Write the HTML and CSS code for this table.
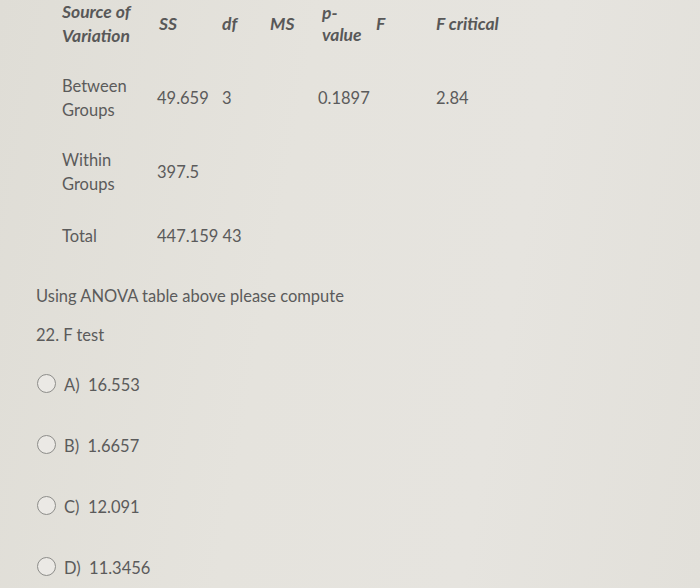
FILE: index.html
```html
<!DOCTYPE html>
<html>
<head>
<meta charset="utf-8">
<link rel="stylesheet" href="styles.css">
</head>
<body>
<div class="page">
  <div class="anova">
    <div class="row head">
      <div class="c c1">Source of<br>Variation</div>
      <div class="c c2">SS</div>
      <div class="c c3">df</div>
      <div class="c c4">MS</div>
      <div class="c c5">p-<br>value</div>
      <div class="c c6">F</div>
      <div class="c c7">F critical</div>
    </div>
    <div class="row">
      <div class="c c1">Between<br>Groups</div>
      <div class="c c2">49.659</div>
      <div class="c c3">3</div>
      <div class="c c4"></div>
      <div class="c c5 pv">0.1897</div>
      <div class="c c6"></div>
      <div class="c c7">2.84</div>
    </div>
    <div class="row">
      <div class="c c1">Within<br>Groups</div>
      <div class="c c2">397.5</div>
      <div class="c c3"></div>
      <div class="c c4"></div>
      <div class="c c5"></div>
      <div class="c c6"></div>
      <div class="c c7"></div>
    </div>
    <div class="row total">
      <div class="c c1">Total</div>
      <div class="c c2">447.159 43</div>
      <div class="c c3"></div>
      <div class="c c4"></div>
      <div class="c c5"></div>
      <div class="c c6"></div>
      <div class="c c7"></div>
    </div>
  </div>

  <p class="prompt">Using ANOVA table above please compute</p>
  <p class="qnum">22. F test</p>

  <ul class="options">
    <li class="opt"><span class="radio"></span><span class="label">A)&nbsp; 16.553</span></li>
    <li class="opt"><span class="radio"></span><span class="label">B)&nbsp; 1.6657</span></li>
    <li class="opt"><span class="radio"></span><span class="label">C)&nbsp; 12.091</span></li>
    <li class="opt"><span class="radio"></span><span class="label">D)&nbsp; 11.3456</span></li>
  </ul>
</div>
</body>
</html>
```

FILE: styles.css
```css
html, body {
  margin: 0;
  padding: 0;
  background: #e3e1db;
}
body {
  width: 700px;
  height: 588px;
  overflow: hidden;
  font-family: Lato, "Open Sans", sans-serif;
  font-size: 16.5px;
  color: #5b5b5b;
  background: linear-gradient(100deg, #dfddd6 0%, #e5e3dd 40%, #e6e4df 70%, #e2e0da 100%);
}
.page {
  padding: 0 0 0 36px;
}
.anova {
  display: flex;
  flex-direction: column;
  row-gap: 26px;
  padding-left: 26px;
}
.row {
  display: grid;
  grid-template-columns: 95px 65px 48px 50px 56px 60px 120px;
  align-items: center;
  line-height: 24px;
  min-height: 48px;
}
.c {
  white-space: nowrap;
}
.row.total {
  min-height: 24px;
  margin-top: 2px;
}
.head {
  font-style: italic;
  font-weight: 700;
  font-size: 17.5px;
  color: #585858;
}
.head .c2 {
  padding-left: 2px;
}
.head .c5 {
  padding-left: 2px;
  line-height: 22px;
}
.pv {
  margin-left: -2px;
}
.prompt {
  margin: 36px 0 0 0;
  line-height: 24px;
}
.qnum {
  margin: 15px 0 0 0;
  line-height: 24px;
}
.options {
  list-style: none;
  margin: 26px 0 0 0;
  padding: 0;
  display: flex;
  flex-direction: column;
  row-gap: 37px;
}
.opt {
  display: flex;
  align-items: center;
  height: 24px;
}
.radio {
  width: 17px;
  height: 17px;
  border: 1.6px solid #8d8d8a;
  border-radius: 50%;
  background: #ebe9e5;
  margin-left: 1px;
  margin-top: -4px;
}
.label {
  margin-left: 8px;
}
```
